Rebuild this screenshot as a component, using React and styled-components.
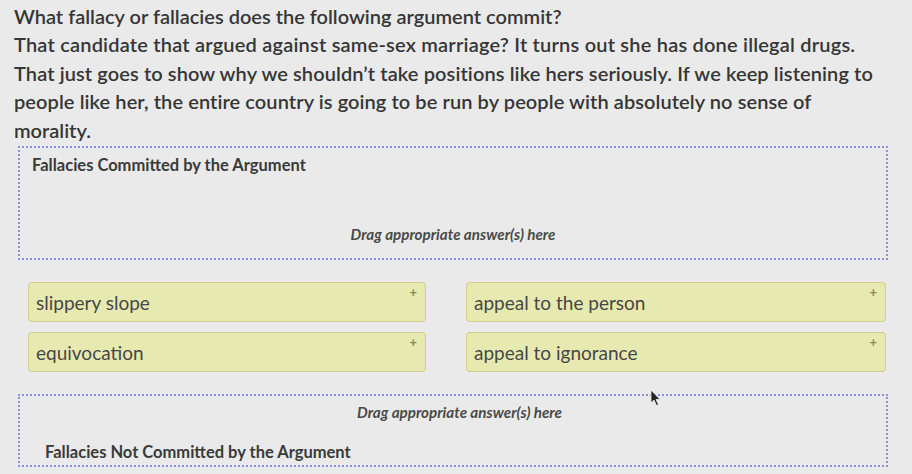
import React from "react";
import styled, { createGlobalStyle } from "styled-components";

const Global = createGlobalStyle`
  html, body { margin: 0; padding: 0; background: #e9eae9; }
  body { font-family: Lato, "Open Sans", sans-serif; color: #3b3b3b; }
`;

const Page = styled.div`
  width: 912px;
  height: 474px;
  overflow: hidden;
  padding: 2px 24px 0 14px;
  box-sizing: border-box;
  display: flex;
  flex-direction: column;
`;

const Question = styled.div`
  font-size: 20px;
  line-height: 28.4px;
  font-weight: 600;
  color: #363636;
`;

const Line = styled.div`
  white-space: nowrap;
  letter-spacing: ${(p) => p.$ls || 0}px;
`;

const DropZone = styled.div`
  margin: ${(p) => p.$mt}px 0 0 4px;
  height: ${(p) => p.$h}px;
  box-sizing: border-box;
  border: 2px dotted #8d93d4;
  padding: ${(p) => p.$pad};
  display: flex;
  flex-direction: column;
  justify-content: space-between;
`;

const ZoneTitle = styled.div`
  font-size: 16.5px;
  font-weight: 700;
  color: #3a3a3a;
`;

const DropHint = styled.div`
  font-size: 15.2px;
  font-weight: 700;
  font-style: italic;
  color: #4a4a4a;
  text-align: center;
`;

const Chips = styled.div`
  display: grid;
  grid-template-columns: 398px 420px;
  column-gap: 40px;
  row-gap: 10px;
  margin: 22px 0 0 14px;
`;

const Chip = styled.div`
  position: relative;
  height: 40px;
  box-sizing: border-box;
  background: #e7eab0;
  border: 1px solid #d8c98c;
  border-radius: 4px;
  display: flex;
  align-items: center;
  padding: 0 7px 0;
  font-size: 19px;
  color: #474747;
`;

const Plus = styled.span`
  position: absolute;
  top: 3px;
  right: 8px;
  font-size: 13px;
  line-height: 1;
  color: #8e8663;
  font-weight: 700;
`;

const Cursor = styled.svg`
  position: absolute;
  left: 650px;
  top: 389px;
`;

const Root = styled.div`
  position: relative;
`;

export default function App() {
  const chips = ["slippery slope", "appeal to the person", "equivocation", "appeal to ignorance"];
  return (
    <Root>
      <Global />
      <Page>
        <Question>
          <Line>What fallacy or fallacies does the following argument commit?</Line>
          <Line $ls={0.2}>That candidate that argued against same-sex marriage? It turns out she has done illegal drugs.</Line>
          <Line $ls={0.1}>That just goes to show why we shouldn’t take positions like hers seriously. If we keep listening to</Line>
          <Line $ls={0.08}>people like her, the entire country is going to be run by people with absolutely no sense of</Line>
          <Line>morality.</Line>
        </Question>
        <DropZone $mt={2} $h={114} $pad="7px 12px 15px">
          <ZoneTitle>Fallacies Committed by the Argument</ZoneTitle>
          <DropHint>Drag appropriate answer(s) here</DropHint>
        </DropZone>
        <Chips>
          {chips.map((c) => (
            <Chip key={c}>
              {c}
              <Plus>+</Plus>
            </Chip>
          ))}
        </Chips>
        <DropZone $mt={22} $h={73} $pad="7px 12px 3px 25px">
          <DropHint>Drag appropriate answer(s) here</DropHint>
          <ZoneTitle>Fallacies Not Committed by the Argument</ZoneTitle>
        </DropZone>
      </Page>
      <Cursor width="12" height="18" viewBox="0 0 12 18">
        <path d="M1 1 L1 14 L4 11 L6.5 16.5 L8.5 15.5 L6 10.5 L10 10.5 Z" fill="#222" stroke="#eee" strokeWidth="0.8" />
      </Cursor>
    </Root>
  );
}
